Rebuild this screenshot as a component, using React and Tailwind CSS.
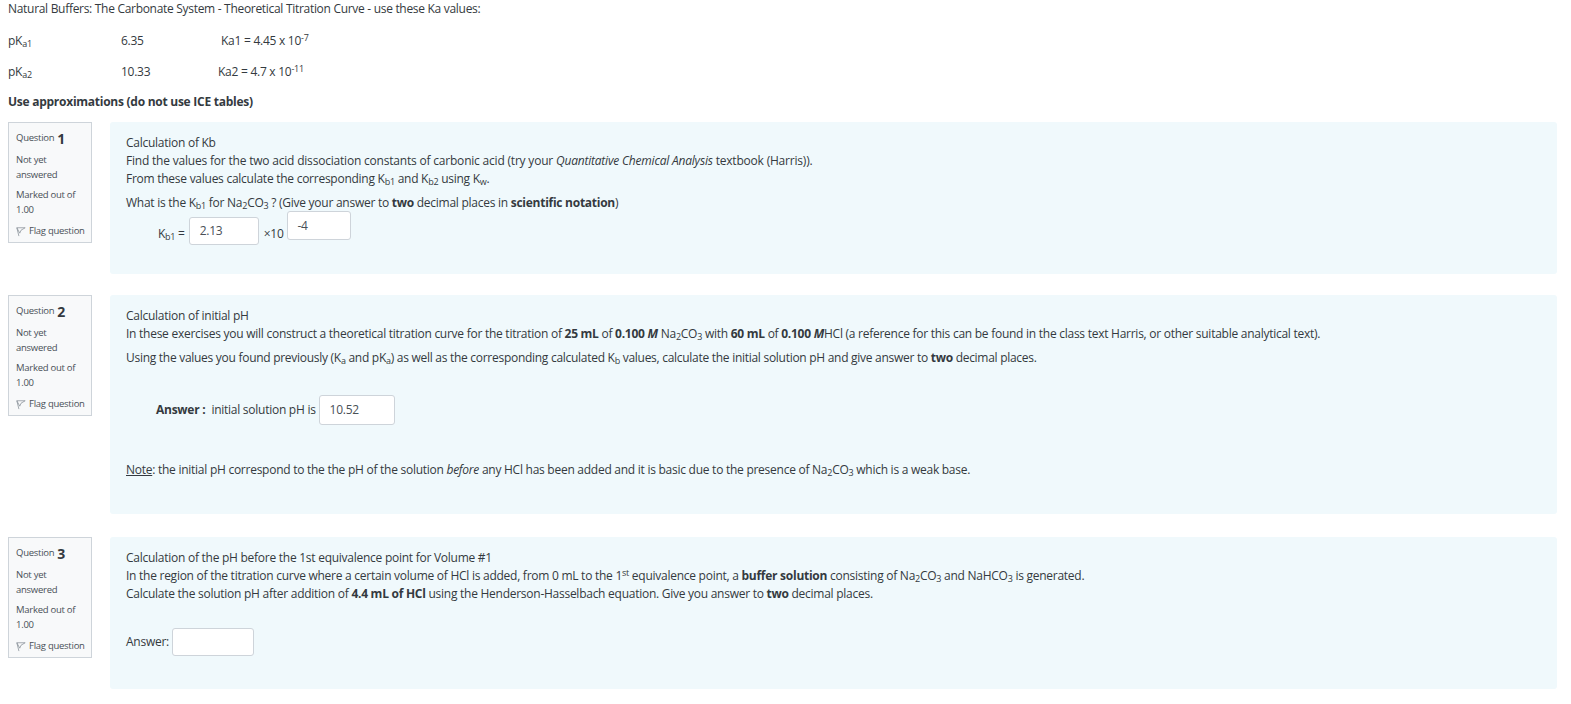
function Sub({ children }) {
  return <sub className="text-[9px] leading-none align-[-2px] static">{children}</sub>;
}

function Sup({ children }) {
  return <sup className="text-[9px] leading-none align-[4px] static">{children}</sup>;
}

function TextInput({ value, className }) {
  return (
    <div className={`bg-white border border-[#ced4da] rounded-[3px] pl-2.5 flex items-center text-[#495057] ${className}`}>
      {value}
    </div>
  );
}

function FlagIcon() {
  return (
    <svg viewBox="0 0 12 12" className="w-[10px] h-[11px] text-[#868e96]" fill="none" stroke="currentColor" strokeWidth="0.9">
      <path d="M1 1.5 L11 1.5 L6 4.5 L4.5 8 Z" />
      <path d="M1 1.5 L3.5 11.5" />
    </svg>
  );
}

function QuestionInfo({ number }) {
  return (
    <div className="w-[84px] shrink-0 h-[121px] bg-[#f8f9fa] border border-[#ced4da] pl-[7px] pt-[6px] text-[9.5px] text-[#495057]">
      <div className="h-[19px] flex items-center gap-[3px]">
        Question <span className="text-[14px] font-bold text-[#343a40]">{number}</span>
      </div>
      <div className="leading-[14.5px] mt-[5px]">Not yet<br />answered</div>
      <div className="leading-[14.5px] mt-[6px]">Marked out of<br />1.00</div>
      <div className="flex items-center gap-[3px] mt-[7px] h-[14px]">
        <FlagIcon />
        Flag question
      </div>
    </div>
  );
}

function Question({ number, height, children }) {
  return (
    <div className="flex gap-[18px]">
      <QuestionInfo number={number} />
      <div className={`flex-1 bg-[#f0f9fc] rounded-[3px] pl-4 pt-[12px] ${height}`}>
        {children}
      </div>
    </div>
  );
}

export default function App() {
  return (
    <div className="w-[1571px] h-[704px] overflow-hidden bg-white pl-2 pr-[14px] text-[#343a40] text-[12px] font-['Open_Sans',sans-serif] tracking-[-0.26px]">
      <div className="h-[17px] leading-[17px] tracking-[-0.3px]">Natural Buffers: The Carbonate System - Theoretical Titration Curve - use these Ka values:</div>

      <div className="flex h-[17px] mt-[15px] leading-[17px]">
        <div className="w-[113px]">pK<Sub>a1</Sub></div>
        <div className="w-[100px]">6.35</div>
        <div>Ka1 = 4.45 x 10<Sup>-7</Sup></div>
      </div>
      <div className="flex h-[17px] mt-[14px] leading-[17px]">
        <div className="w-[113px]">pK<Sub>a2</Sub></div>
        <div className="w-[97px]">10.33</div>
        <div>Ka2 = 4.7 x 10<Sup>-11</Sup></div>
      </div>
      <div className="h-[17px] mt-[13px] leading-[17px] font-bold">Use approximations (do not use ICE tables)</div>

      <div className="mt-[12px]">
        <Question number="1" height="h-[152px]">
          <div className="leading-[18px]">Calculation of Kb</div>
          <div className="leading-[18px] tracking-[-0.2px]">Find the values for the two acid dissociation constants of carbonic acid (try your <em>Quantitative Chemical Analysis</em> textbook (Harris)).</div>
          <div className="leading-[18px]">From these values calculate the corresponding K<Sub>b1</Sub> and K<Sub>b2</Sub> using K<Sub>w</Sub>.</div>
          <div className="leading-[18px] mt-[6px]">What is the K<Sub>b1</Sub> for Na<Sub>2</Sub>CO<Sub>3</Sub> ? (Give your answer to <b>two</b> decimal places in <b>scientific notation</b>)</div>
          <div className="flex items-start mt-[4px] ml-[32px]">
            <span className="mt-[9px] mr-1">K<Sub>b1</Sub> =</span>
            <TextInput value="2.13" className="w-[70px] h-[28px] mt-[1px]" />
            <span className="mt-[9px] ml-[5px] mr-[3px]">×10</span>
            <TextInput value="-4" className="w-[64px] h-[29px] -mt-[5px]" />
          </div>
        </Question>
      </div>

      <div className="mt-[21px]">
        <Question number="2" height="h-[219px]">
          <div className="leading-[18px]">Calculation of initial pH</div>
          <div className="leading-[18px]">In these exercises you will construct a theoretical titration curve for the titration of <b>25 mL</b> of <b>0.100 <em>M</em></b> Na<Sub>2</Sub>CO<Sub>3</Sub> with <b>60 mL</b> of <b>0.100 <em>M</em></b>HCl (a reference for this can be found in the class text Harris, or other suitable analytical text).</div>
          <div className="leading-[18px] mt-[6px] tracking-[-0.28px]">Using the values you found previously (K<Sub>a</Sub> and pK<Sub>a</Sub>) as well as the corresponding calculated K<Sub>b</Sub> values, calculate the initial solution pH and give answer to <b>two</b> decimal places.</div>
          <div className="flex items-center mt-[28px] ml-[30px]">
            <b>Answer :</b>
            <span className="ml-[6px] mr-[3px]">initial solution pH is</span>
            <TextInput value="10.52" className="w-[76px] h-[30px]" />
          </div>
          <div className="leading-[18px] mt-[36px]"><u>Note</u>: the initial pH correspond to the the pH of the solution <em>before</em> any HCl has been added and it is basic due to the presence of Na<Sub>2</Sub>CO<Sub>3</Sub> which is a weak base.</div>
        </Question>
      </div>

      <div className="mt-[23px]">
        <Question number="3" height="h-[152px]">
          <div className="leading-[18px]">Calculation of the pH before the 1st equivalence point for Volume #1</div>
          <div className="leading-[18px]">In the region of the titration curve where a certain volume of HCl is added, from 0 mL to the 1<Sup>st</Sup> equivalence point, a <b>buffer solution</b> consisting of Na<Sub>2</Sub>CO<Sub>3</Sub> and NaHCO<Sub>3</Sub> is generated.</div>
          <div className="leading-[18px]">Calculate the solution pH after addition of <b>4.4 mL of HCl</b> using the Henderson-Hasselbach equation. Give you answer to <b>two</b> decimal places.</div>
          <div className="flex items-center mt-[25px]">
            <span className="mr-[3px]">Answer:</span>
            <TextInput value="" className="w-[82px] h-[28px]" />
          </div>
        </Question>
      </div>
    </div>
  );
}
